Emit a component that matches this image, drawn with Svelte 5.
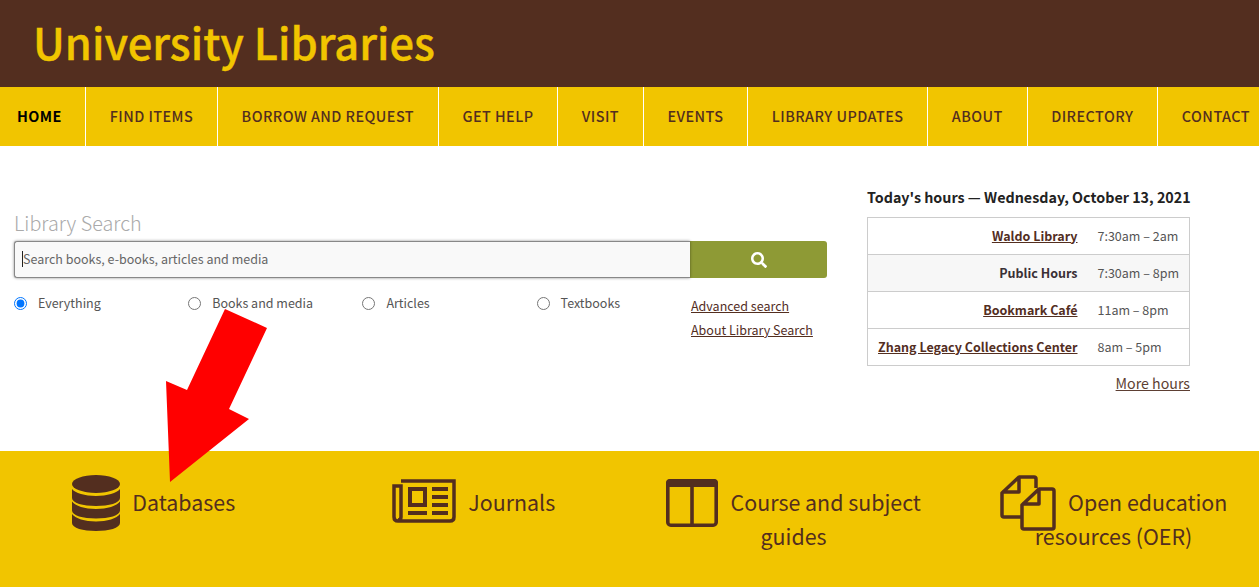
<script>
  const nav = ['HOME','FIND ITEMS','BORROW AND REQUEST','GET HELP','VISIT','EVENTS','LIBRARY UPDATES','ABOUT','DIRECTORY','CONTACT'];
  const scopes = ['Everything','Books and media','Articles','Textbooks'];
  const hours = [
    { name: 'Waldo Library', time: '7:30am – 2am', link: true },
    { name: 'Public Hours', time: '7:30am – 8pm', link: false },
    { name: 'Bookmark Café', time: '11am – 8pm', link: true },
    { name: 'Zhang Legacy Collections Center', time: '8am – 5pm', link: true }
  ];
</script>

<div class="page">
  <header class="brand"><a href="#top">University Libraries</a></header>

  <nav class="nav">
    {#each nav as item, i}
      <a href="#top" class:active={i === 0}>{item}</a>
    {/each}
  </nav>

  <main class="main">
    <section class="search">
      <h2>Library Search</h2>
      <form class="bar">
        <span class="field">
          <input type="text" placeholder="Search books, e-books, articles and media" />
          <i class="caret"></i>
        </span>
        <button type="button" aria-label="Search">
          <svg viewBox="0 0 512 512" width="16" height="16"><path fill="#fff" d="M505 442.700L405.300 343c-4.500-4.500-10.600-7-17-7H372c27.600-35.300 44-79.700 44-128C416 93.100 322.900 0 208 0S0 93.100 0 208s93.100 208 208 208c48.300 0 92.700-16.400 128-44v16.300c0 6.400 2.500 12.500 7 17l99.700 99.700c9.400 9.400 24.600 9.400 33.900 0l28.300-28.300c9.400-9.400 9.400-24.600.1-34zM208 336c-70.700 0-128-57.200-128-128 0-70.700 57.200-128 128-128 70.700 0 128 57.200 128 128 0 70.700-57.200 128-128 128z"/></svg>
        </button>
      </form>
      <div class="options">
        <div class="scopes">
          {#each scopes as s, i}
            <label><input type="radio" name="scope" checked={i === 0} /><span>{s}</span></label>
          {/each}
        </div>
        <div class="links">
          <a href="#top">Advanced search</a>
          <a href="#top">About Library Search</a>
        </div>
      </div>
    </section>

    <aside class="hours">
      <h3>Today's hours — Wednesday, October 13, 2021</h3>
      <table>
        <tbody>
          {#each hours as h}
            <tr>
              <th>{#if h.link}<a href="#top">{h.name}</a>{:else}{h.name}{/if}</th>
              <td>{h.time}</td>
            </tr>
          {/each}
        </tbody>
      </table>
      <a class="more" href="#top">More hours</a>
    </aside>
  </main>

  <section class="band">
    <div class="cols">
      <a href="#top">
        <svg class="ico" viewBox="0 0 48 56" width="48" height="56">
          <g fill="#532e1f">
            <ellipse cx="24" cy="9" rx="24" ry="9"/>
            <path d="M0 14C3 18 13 21 24 21S45 18 48 14V23C48 28 37 31 24 31S0 28 0 23Z"/>
            <path d="M0 26.500C3 31 13 34 24 34S45 31 48 26.500V35.500C48 40.500 37 43.500 24 43.500S0 40.500 0 35.500Z"/>
            <path d="M0 39C3 43.500 13 46.500 24 46.500S45 43.500 48 39V48C48 53 37 56 24 56S0 53 0 48Z"/>
          </g>
        </svg>Databases
      </a>
      <a href="#top">
        <svg class="ico news" viewBox="0 0 64 44" width="64" height="44">
          <g fill="none" stroke="#532e1f" stroke-width="3.500">
            <path d="M9 2H62V38Q62 42 58 42H6Q2 42 2 38V7H9V38Q9 41 6 41"/>
          </g>
          <g fill="#532e1f">
            <path fill-rule="evenodd" d="M16 8H35V28H16ZM20 12V24H31V12Z"/>
            <path d="M40 8H56V12H40ZM40 16H56V20H40ZM40 24H56V28H40ZM16 32H35V36H16ZM40 32H56V36H40Z"/>
          </g>
        </svg>Journals
      </a>
      <a href="#top">
        <svg class="ico" viewBox="0 0 52 48" width="52" height="48">
          <rect x="1.800" y="1.800" width="48.400" height="44.400" rx="3" fill="none" stroke="#532e1f" stroke-width="3.600"/>
          <path d="M0 4Q0 0 4 0H48Q52 0 52 4V8H0Z" fill="#532e1f"/>
          <rect x="24.200" y="6" width="3.600" height="40" fill="#532e1f"/>
        </svg>Course and subject guides
      </a>
      <a href="#top">
        <svg class="ico" viewBox="0 0 56 56" width="56" height="56">
          <g fill="none" stroke="#532e1f" stroke-width="3.500" stroke-linejoin="round">
            <path d="M19 2H34Q36 2 36 4V13M22 42H4Q2 42 2 40V18L19 2V17H2"/>
            <path d="M39 14H52Q54 14 54 16V52Q54 54 52 54H24Q22 54 22 52V30L39 14V29H22"/>
          </g>
        </svg>Open education resources (OER)
      </a>
    </div>
  </section>

  <svg class="arrow" viewBox="0 0 1259 587" width="1259" height="587" aria-hidden="true">
    <polygon fill="#ff0000" points="225,309 267,328 229,409 249,419 170,482 166,381 187,390"/>
  </svg>
</div>

<style>
  :global(body) { margin: 0; background: #fff; }
  .page {
    position: relative;
    width: 1259px;
    height: 587px;
    overflow: hidden;
    font-family: "Noto Sans CJK SC", "Liberation Sans", sans-serif;
    color: #333;
  }
  a { color: inherit; }

  .brand {
    height: 87px;
    box-sizing: border-box;
    background: #532e1f;
    padding: 0 0 4px 33px;
    display: flex;
    align-items: center;
  }
  .brand a {
    color: #f1c500;
    text-decoration: none;
    font-size: 43.400px;
    font-weight: 500;
    -webkit-text-stroke: .4px #f1c500;
    line-height: 1;
  }

  .nav {
    height: 59px;
    background: #f1c500;
    display: flex;
    white-space: nowrap;
  }
  .nav a {
    display: flex;
    align-items: center;
    padding: 0 23.700px 2px;
    border-right: 1px solid #fff;
    color: #532e1f;
    font-size: 14.400px;
    font-weight: 500;
    letter-spacing: .45px;
    text-decoration: none;
  }
  .nav a:last-child { border-right: 0; }
  .nav a.active { color: #000; padding-left: 17px; padding-right: 23.100px; font-weight: 700; }

  .main {
    height: 305px;
    box-sizing: border-box;
    padding: 40px 0 0 14px;
    display: flex;
    align-items: flex-start;
  }

  .search { width: 813px; padding-top: 24px; }
  h2 {
    margin: 0 0 6px;
    font-size: 19.800px;
    line-height: 25px;
    font-weight: 300;
    color: #aaa;
  }
  .bar { display: flex; height: 37px; }
  .field {
    position: relative;
    flex: 1;
    display: block;
  }
  .field input {
    width: 100%;
    height: 100%;
    box-sizing: border-box;
    border: 1px solid #888;
    border-right: 0;
    border-radius: 3px 0 0 3px;
    background: #f9f9f9;
    box-shadow: 0 0 3px rgba(0,0,0,.45);
    padding: 0 8px 2px;
    font: 400 12.500px "Noto Sans CJK SC", sans-serif;
    outline: none;
  }
  .field input::placeholder { color: #666; opacity: 1; }
  .caret {
    position: absolute;
    left: 8px;
    top: 10px;
    width: 1px;
    height: 16px;
    background: #222;
  }
  .bar button {
    width: 137px;
    flex: none;
    border: 0;
    border-radius: 0 3px 3px 0;
    background: #8e9a35;
    padding: 0;
    display: flex;
    align-items: center;
    justify-content: center;
  }

  .options { display: flex; margin-top: 16px; }
  .scopes { width: 677px; flex: none; display: grid; grid-template-columns: repeat(4, 174.200px); align-content: start; }
  .scopes label {
    display: flex;
    align-items: center;
    font-size: 12.500px;
    line-height: 18px;
    color: #555;
  }
  .scopes input {
    width: 13px;
    height: 13px;
    margin: 1px 11px 0 0;
    accent-color: #0075ff;
  }
  .links {
    display: flex;
    flex-direction: column;
    gap: 6px;
    padding-top: 3px;
    font-size: 12.500px;
    line-height: 18px;
    color: #532e1f;
    white-space: nowrap;
  }

  .hours { width: 323px; margin-left: 40px; }
  h3 {
    margin: 0 0 9px;
    font-size: 14.300px;
    line-height: 22px;
    font-weight: 700;
    color: #222;
    white-space: nowrap;
  }
  table {
    width: 323px;
    table-layout: fixed;
    border-collapse: collapse;
    font-size: 12.500px;
  }
  tr:nth-child(2) { background: #f7f7f7; }
  th, td {
    height: 37px;
    box-sizing: border-box;
    border-top: 1px solid #ccc;
    border-bottom: 1px solid #ccc;
    padding: 0 0 2px;
    white-space: nowrap;
  }
  th {
    text-align: right;
    border-left: 1px solid #ccc;
    color: #3a3035;
    font-weight: 600;
    padding-right: 20px;
    width: 230px;
  }
  th a { color: #532e1f; }
  td { border-right: 1px solid #ccc; color: #555; }
  .more {
    display: block;
    text-align: right;
    margin-top: 7px;
    font-size: 14.200px;
    line-height: 20px;
    color: #5d3f33;
  }

  .band {
    height: 136px;
    background: #f1c500;
    box-sizing: border-box;
    padding-top: 34px;
  }
  .cols {
    display: grid;
    grid-template-columns: repeat(4, 320px);
    margin-left: -6.500px;
    width: 1280px;
  }
  .cols a {
    display: block;
    box-sizing: border-box;
    padding: 0 20px;
    text-align: center;
    text-decoration: none;
    color: #532e1f;
    font-size: 21.400px;
    line-height: 34px;
  }
  .ico {
    display: inline-block;
    position: relative;
    top: -2px;
    vertical-align: middle;
    margin: -20px 12.500px -20px 0;
  }
  .news { top: -4px; }

  .arrow { position: absolute; left: 0; top: 0; pointer-events: none; }
</style>
